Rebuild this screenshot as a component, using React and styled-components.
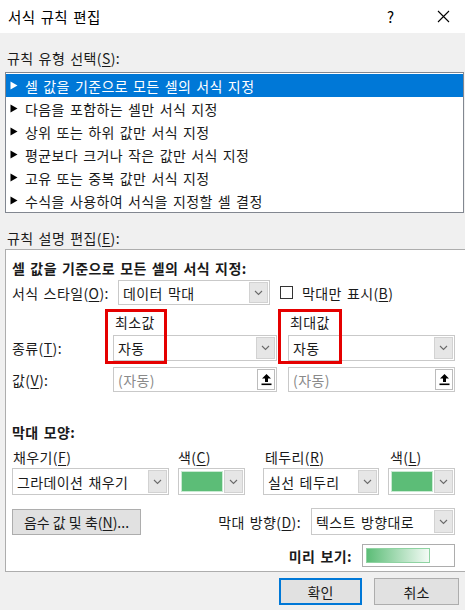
import React from 'react';
import styled, { createGlobalStyle } from 'styled-components';

const GlobalStyle = createGlobalStyle`
    html, body {
        margin: 0;
        padding: 0;
    }
    body {
        background: #f0f0f0;
        font-family: "Noto Sans CJK KR", "Noto Sans", sans-serif;
        font-size: 14px;
        letter-spacing: 0.4px;
        word-spacing: 1.5px;
        color: #1a1a1a;
        overflow: hidden;
    }
    u {
        text-decoration-thickness: 1px;
        text-underline-offset: 2px;
    }
`;

const Window = styled.div`
    width: 465px;
    height: 610px;
    display: flex;
    flex-direction: column;
    overflow: hidden;
`;

const TitleBar = styled.div`
    height: 33px;
    background: #fff;
    display: flex;
    align-items: center;
    padding-left: 8px;
    flex-shrink: 0;
`;

const Title = styled.div`
    flex: 1;
    font-size: 14.5px;
    color: #000;
`;

const HelpMark = styled.div`
    width: 20px;
    font-size: 15px;
    color: #000;
    margin-right: 30px;
`;

const CloseMark = styled.div`
    width: 28px;
    display: flex;
    align-items: center;
`;

const SectionLabel = styled.div`
    height: 20px;
    line-height: 20px;
    padding-left: 7px;
    margin-top: 15px;
`;

const ListBox = styled.div`
    margin: 4px 1px 0 5px;
    border: 1px solid #828790;
    background: #fff;
    padding: 1px 0 0 0;
    display: flex;
    flex-direction: column;
`;

const ListItem = styled.div`
    height: 23px;
    display: flex;
    align-items: center;
    padding-left: 4px;
    gap: 7px;
    background: ${p => (p.$selected ? '#0078d7' : 'transparent')};
    color: ${p => (p.$selected ? '#fff' : '#1a1a1a')};
`;

const Panel = styled.div`
    margin: 1px 0 0 5px;
    border: 1px solid #adadad;
    border-right: none;
    background: #fff;
    padding: 8px 10px 4px 6px;
    display: flex;
    flex-direction: column;
`;

const BoldTitle = styled.div`
    height: 20px;
    line-height: 20px;
    font-weight: bold;
    margin-top: ${p => p.$top || 0}px;
`;

const Row = styled.div`
    display: flex;
    align-items: center;
    gap: ${p => p.$gap || 0}px;
    justify-content: ${p => p.$justify || 'flex-start'};
    margin-top: ${p => p.$top || 0}px;
`;

const FieldLabel = styled.div`
    width: ${p => (p.$width ? `${p.$width}px` : 'auto')};
    white-space: nowrap;
    flex-shrink: 0;
`;

const ComboBox = styled.div`
    width: ${p => p.$width}px;
    height: ${p => p.$height || 25}px;
    box-sizing: border-box;
    border: 1px solid #c9c9c9;
    background: #fff;
    display: flex;
    align-items: stretch;
    flex-shrink: 0;
`;

const ComboText = styled.div`
    flex: 1;
    display: flex;
    align-items: center;
    padding-left: 4px;
    color: ${p => (p.$muted ? '#8a8a8a' : '#1a1a1a')};
    white-space: nowrap;
    overflow: hidden;
`;

const DropButton = styled.div`
    width: 19px;
    margin: 1px;
    box-sizing: border-box;
    background: #e6e6e6;
    border: 1px solid #d2d2d2;
    display: flex;
    align-items: center;
    justify-content: center;
`;

const RefButton = styled.div`
    width: 18px;
    margin: 1px;
    box-sizing: border-box;
    background: #fff;
    border: 1px solid #bcbcbc;
    display: flex;
    align-items: center;
    justify-content: center;
`;

const Swatch = styled.div`
    flex: 1;
    margin: 2px 0 2px 2px;
    background: #5cbd77;
    border: 1px solid #c9ead2;
`;

const CheckBox = styled.div`
    width: 13px;
    height: 13px;
    box-sizing: border-box;
    border: 1px solid #333;
    background: #fff;
    flex-shrink: 0;
`;

const MinMax = styled.div`
    display: flex;
    margin-top: 7px;
`;

const Stack = styled.div`
    position: relative;
    display: flex;
    flex-direction: column;
    width: ${p => p.$width}px;
    margin-left: ${p => p.$left || 0}px;
`;

const StackHead = styled.div`
    height: 20px;
    line-height: 20px;
    padding-left: 2px;
    margin-bottom: 3px;
`;

const StackLabel = styled.div`
    height: ${p => p.$height}px;
    display: flex;
    align-items: center;
    margin-bottom: ${p => p.$bottom || 0}px;
`;

const Spacer = styled.div`
    height: ${p => p.$height}px;
`;

const RedMark = styled.div`
    position: absolute;
    top: -3px;
    left: ${p => p.$left}px;
    width: ${p => p.$width}px;
    height: 55px;
    box-sizing: border-box;
    border: 3px solid #e50000;
    pointer-events: none;
`;

const Group = styled.div`
    display: flex;
    gap: 9px;
`;

const Field = styled.div`
    display: flex;
    flex-direction: column;
`;

const SmallLabel = styled.div`
    height: 18px;
    line-height: 18px;
    margin-bottom: 2px;
    padding-left: ${p => p.$indent || 0}px;
`;

const PushButton = styled.div`
    width: ${p => p.$width}px;
    height: ${p => p.$height || 26}px;
    box-sizing: border-box;
    background: #e1e1e1;
    border: 1px solid ${p => (p.$default ? '#0078d7' : '#adadad')};
    box-shadow: ${p => (p.$default ? 'inset 0 0 0 1px #0078d7' : 'none')};
    display: flex;
    align-items: center;
    justify-content: center;
    white-space: nowrap;
    letter-spacing: 0;
    word-spacing: 0;
    flex-shrink: 0;
`;

const PreviewBox = styled.div`
    width: 93px;
    height: 23px;
    box-sizing: border-box;
    border: 1px solid #adadad;
    background: #fff;
    padding: 3px;
    display: flex;
`;

const PreviewBar = styled.div`
    width: 64px;
    background: linear-gradient(to right, #5cbd77, #f4fbf6);
    border: 1px solid #8fd3a2;
    box-sizing: border-box;
`;

const Footer = styled.div`
    display: flex;
    justify-content: flex-end;
    gap: 12px;
    margin-top: 6px;
    padding-right: 6px;
`;

const Chevron = () => (
    <svg width="9" height="6" viewBox="0 0 9 6">
        <polyline points="1,1 4.5,4.5 8,1" fill="none" stroke="#6a6a6a" strokeWidth="1.1" />
    </svg>
);

const UpArrow = () => (
    <svg width="11" height="13" viewBox="0 0 11 13">
        <path d="M5.5 1 L10 5.5 H7 V9 H4 V5.5 H1 Z" fill="#000" />
        <rect x="0.5" y="10.5" width="10" height="1.6" fill="#000" />
    </svg>
);

const Triangle = ({ color }) => (
    <svg width="8" height="9" viewBox="0 0 8 9">
        <polygon points="0.5,0.5 7.5,4.5 0.5,8.5" fill={color} />
    </svg>
);

const CloseIcon = () => (
    <svg width="13" height="13" viewBox="0 0 13 13">
        <path d="M1 1 L12 12 M12 1 L1 12" stroke="#000" strokeWidth="1.1" />
    </svg>
);

const Combo = ({ width, height, text, muted }) => (
    <ComboBox $width={width} $height={height}>
        <ComboText $muted={muted}>{text}</ComboText>
        <DropButton><Chevron /></DropButton>
    </ComboBox>
);

const RefInput = ({ width }) => (
    <ComboBox $width={width} $height={25}>
        <ComboText $muted>(자동)</ComboText>
        <RefButton><UpArrow /></RefButton>
    </ComboBox>
);

const ColorCombo = () => (
    <ComboBox $width={67} $height={27}>
        <Swatch />
        <DropButton><Chevron /></DropButton>
    </ComboBox>
);

const ruleTypes = [
    '셀 값을 기준으로 모든 셀의 서식 지정',
    '다음을 포함하는 셀만 서식 지정',
    '상위 또는 하위 값만 서식 지정',
    '평균보다 크거나 작은 값만 서식 지정',
    '고유 또는 중복 값만 서식 지정',
    '수식을 사용하여 서식을 지정할 셀 결정',
];

export default function App() {
    return (
        <>
            <GlobalStyle />
            <Window>
                <TitleBar>
                    <Title>서식 규칙 편집</Title>
                    <HelpMark>?</HelpMark>
                    <CloseMark><CloseIcon /></CloseMark>
                </TitleBar>

                <SectionLabel>규칙 유형 선택(<u>S</u>):</SectionLabel>
                <ListBox>
                    {ruleTypes.map((t, i) => (
                        <ListItem key={t} $selected={i === 0}>
                            <Triangle color={i === 0 ? '#fff' : '#000'} />
                            {t}
                        </ListItem>
                    ))}
                </ListBox>

                <SectionLabel>규칙 설명 편집(<u>E</u>):</SectionLabel>
                <Panel>
                    <BoldTitle>셀 값을 기준으로 모든 셀의 서식 지정:</BoldTitle>
                    <Row $top={2}>
                        <FieldLabel $width={106}>서식 스타일(<u>O</u>):</FieldLabel>
                        <Combo width={152} text="데이터 막대" />
                        <Row $gap={9} style={{ marginLeft: 10 }}>
                            <CheckBox />
                            <span>막대만 표시(<u>B</u>)</span>
                        </Row>
                    </Row>

                    <MinMax>
                        <Stack $width={101}>
                            <StackHead />
                            <StackLabel $height={26} $bottom={6}>종류(<u>T</u>):</StackLabel>
                            <StackLabel $height={25}>값(<u>V</u>):</StackLabel>
                        </Stack>
                        <Stack $width={164}>
                            <StackHead>최소값</StackHead>
                            <Combo width={164} height={26} text="자동" />
                            <Spacer $height={6} />
                            <RefInput width={164} />
                            <RedMark $left={-8} $width={62} />
                        </Stack>
                        <Stack $width={167} $left={11}>
                            <StackHead>최대값</StackHead>
                            <Combo width={167} height={26} text="자동" />
                            <Spacer $height={6} />
                            <RefInput width={167} />
                            <RedMark $left={-10} $width={64} />
                        </Stack>
                    </MinMax>

                    <BoldTitle $top={30}>막대 모양:</BoldTitle>
                    <Row $gap={18} $top={6} style={{ alignItems: 'flex-start' }}>
                        <Group>
                            <Field>
                                <SmallLabel $indent={1}>채우기(<u>F</u>)</SmallLabel>
                                <Combo width={157} height={27} text="그라데이션 채우기" />
                            </Field>
                            <Field>
                                <SmallLabel>색(<u>C</u>)</SmallLabel>
                                <ColorCombo />
                            </Field>
                        </Group>
                        <Group>
                            <Field>
                                <SmallLabel $indent={2}>테두리(<u>R</u>)</SmallLabel>
                                <Combo width={116} height={27} text="실선 테두리" />
                            </Field>
                            <Field>
                                <SmallLabel $indent={2}>색(<u>L</u>)</SmallLabel>
                                <ColorCombo />
                            </Field>
                        </Group>
                    </Row>

                    <Row $justify="space-between" $top={13}>
                        <PushButton $width={129}>음수 값 및 축(<u>N</u>)...</PushButton>
                        <Row $gap={10}>
                            <FieldLabel>막대 방향(<u>D</u>):</FieldLabel>
                            <Combo width={144} height={27} text="텍스트 방향대로" />
                        </Row>
                    </Row>

                    <Row $justify="flex-end" $gap={10} $top={9}>
                        <FieldLabel style={{ fontWeight: 'bold' }}>미리 보기:</FieldLabel>
                        <PreviewBox><PreviewBar /></PreviewBox>
                    </Row>
                </Panel>

                <Footer>
                    <PushButton $width={83} $height={27} $default>확인</PushButton>
                    <PushButton $width={85} $height={27}>취소</PushButton>
                </Footer>
            </Window>
        </>
    );
}
